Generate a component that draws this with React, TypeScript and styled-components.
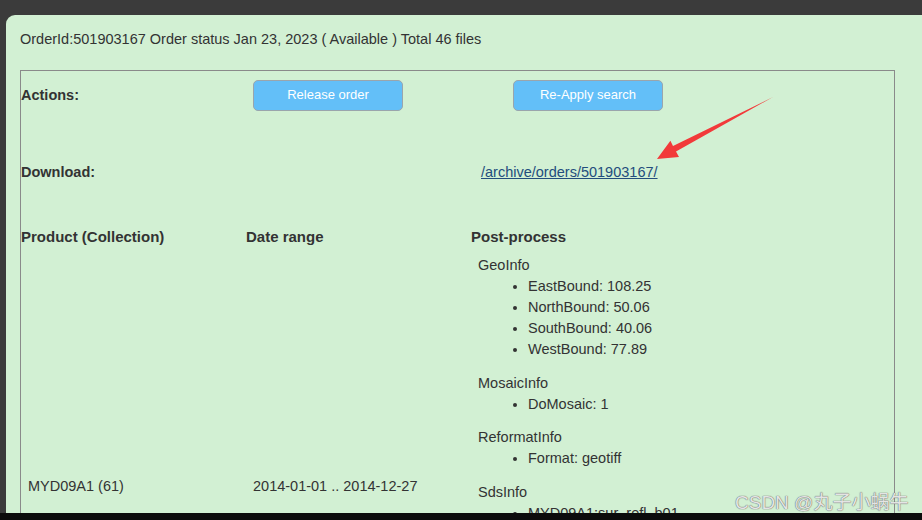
import React from 'react';
import styled, { createGlobalStyle } from 'styled-components';

const GlobalStyle = createGlobalStyle`
    html, body {
        margin: 0;
        padding: 0;
        background: #3b3b3b;
        overflow: hidden;
    }
    * {
        box-sizing: border-box;
    }
`;

interface Group {
    name: string;
    items: string[];
}

const groups: Group[] = [
    {
        name: 'GeoInfo',
        items: ['EastBound: 108.25', 'NorthBound: 50.06', 'SouthBound: 40.06', 'WestBound: 77.89'],
    },
    { name: 'MosaicInfo', items: ['DoMosaic: 1'] },
    { name: 'ReformatInfo', items: ['Format: geotiff'] },
    {
        name: 'SdsInfo',
        items: [
            'MYD09A1:sur_refl_b01',
            'MYD09A1:sur_refl_b02',
            'MYD09A1:sur_refl_b03',
            'MYD09A1:sur_refl_b04',
            'MYD09A1:sur_refl_b05',
            'MYD09A1:sur_refl_b06',
            'MYD09A1:sur_refl_b07',
            'MYD09A1:sur_refl_qc_500m',
            'MYD09A1:sur_refl_szen',
            'MYD09A1:sur_refl_vzen',
        ],
    },
];

function App() {
    return (
        <Page>
            <GlobalStyle />
            <Panel>
                <Title>OrderId:501903167 Order status Jan 23, 2023 ( Available ) Total 46 files</Title>

                <Box>
                    <ActionRow>
                        <Label>Actions:</Label>
                        <Button>Release order</Button>
                        <Button>Re-Apply search</Button>
                    </ActionRow>

                    <DownloadRow>
                        <Label>Download:</Label>
                        <Link href="#">/archive/orders/501903167/</Link>
                    </DownloadRow>

                    <HeaderRow>
                        <Label $size={15}>Product (Collection)</Label>
                        <Label $size={15}>Date range</Label>
                        <Label $size={15}>Post-process</Label>
                    </HeaderRow>

                    <DataRow>
                        <Cell>MYD09A1 (61)</Cell>
                        <Cell>2014-01-01 .. 2014-12-27</Cell>
                        <PostCell>
                            {groups.map((g) => (
                                <GroupBlock key={g.name}>
                                    <GroupName>{g.name}</GroupName>
                                    <List>
                                        {g.items.map((it) => (
                                            <li key={it}>{it}</li>
                                        ))}
                                    </List>
                                </GroupBlock>
                            ))}
                        </PostCell>
                    </DataRow>
                </Box>

                <Arrow width="130" height="70" viewBox="650 92 130 70">
                    <polygon points="773,97 676,151.5 679,157 657,159 670.4,140.7 673,146" fill="#f23a3a" />
                </Arrow>
            </Panel>

            <Watermark>CSDN @丸子小蜗牛</Watermark>
            <BottomBar />
        </Page>
    );
}

const Page = styled.div`
    position: relative;
    height: 520px;
    display: flex;
    flex-direction: column;
    padding-top: 15px;
    overflow: hidden;
    font-family: "Liberation Sans", Arial, sans-serif;
    color: #333;
`;

const Panel = styled.div`
    position: relative;
    flex: 1;
    min-height: 0;
    margin-left: 6px;
    width: 940px;
    background: #d2f0d3;
    border-top-left-radius: 9px;
    padding: 15px 0 0 14px;
    overflow: hidden;
`;

const Title = styled.div`
    font-size: 14.5px;
    line-height: 18px;
    height: 40px;
`;

const Box = styled.div`
    width: 875px;
    border: 1px solid #8a8a8a;
    border-bottom: none;
`;

const Label = styled.div<{ $size?: number }>`
    font-weight: bold;
    font-size: ${(p) => p.$size ?? 14.5}px;
    color: #333;
`;

const ActionRow = styled.div`
    display: grid;
    grid-template-columns: 232px 260px auto;
    align-items: center;
    height: 48px;
`;

const Button = styled.button`
    width: 150px;
    height: 31px;
    background: #63bff8;
    border: 1px solid #9aa5ac;
    border-radius: 5px;
    color: #fff;
    font-family: "Liberation Sans", Arial, sans-serif;
    font-size: 13px;
    line-height: 28px;
    padding: 0 0 1px;
`;

const DownloadRow = styled.div`
    display: grid;
    grid-template-columns: 460px auto;
    align-items: center;
    height: 106px;
`;

const Link = styled.a`
    font-size: 14.5px;
    color: #234d7d;
    text-decoration: underline;
`;

const HeaderRow = styled.div`
    display: grid;
    grid-template-columns: 225px 225px auto;
    align-items: center;
    height: 22px;
`;

const DataRow = styled.div`
    display: grid;
    grid-template-columns: 225px 225px auto;
    align-items: center;
`;

const Cell = styled.div`
    padding: 7px;
    font-size: 14.5px;
`;

const PostCell = styled.div`
    padding: 8px 7px 12px;
    font-size: 14.5px;
    line-height: 21px;
`;

const GroupBlock = styled.div`
    margin-bottom: 12.5px;

    &:last-child {
        margin-bottom: 0;
    }
`;

const GroupName = styled.div``;

const List = styled.ul`
    margin: 0;
    padding-left: 50px;
    list-style: disc;
`;

const Arrow = styled.svg`
    position: absolute;
    left: 644px;
    top: 77px;
`;

const Watermark = styled.div`
    position: absolute;
    left: 735px;
    top: 487px;
    font-family: "Liberation Sans", "Noto Sans CJK SC", sans-serif;
    font-size: 19px;
    color: #e4e4e4;
    text-shadow: 0 0 1px #6a6a6a, 0 0 1px #6a6a6a;
    pointer-events: none;
`;

const BottomBar = styled.div`
    height: 7px;
    flex-shrink: 0;
    background: #0c0c0c;
`;

export default App;
